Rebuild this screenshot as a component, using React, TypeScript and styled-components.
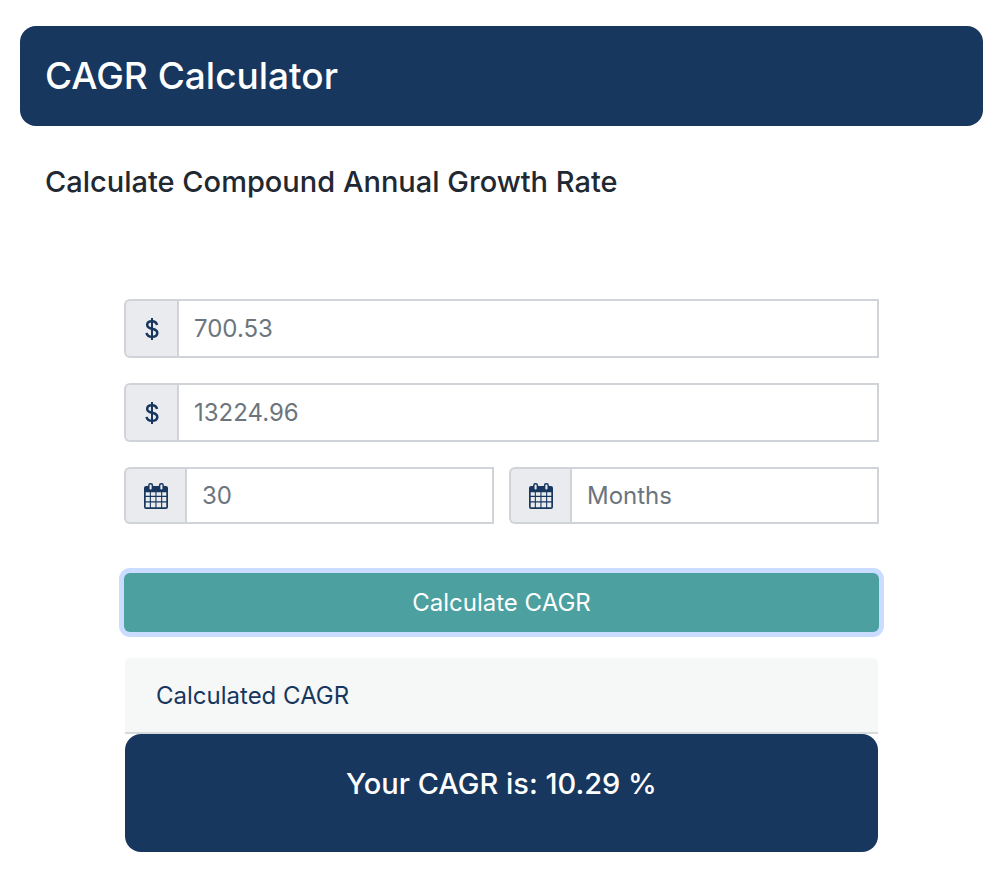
import React, { useState } from "react";
import styled, { createGlobalStyle } from "styled-components";

const navy = "#18375f";
const line = "#d0d4d8";

const GlobalStyle = createGlobalStyle`
  *, *::before, *::after { box-sizing: border-box; }
  body {
    margin: 0;
    background: #fff;
    color: #212832;
    font-family: Inter, "Liberation Sans", sans-serif;
    font-size: 24px;
    line-height: 36px;
  }
`;

const Page = styled.main`
  padding: 26px 17px 32px 20px;
`;

const Header = styled.header`
  padding: 26px 25px;
  border-radius: 16px;
  background: ${navy};
  color: #fff;
`;

const Title = styled.h1`
  margin: 0;
  font-size: 37px;
  font-weight: 500;
  line-height: 48px;
`;

const Subtitle = styled.h2`
  margin: 0;
  padding: 38px 25px 0;
  font-size: 29px;
  font-weight: 500;
  line-height: 36px;
`;

const Form = styled.form`
  margin: 99px 104px 0;
`;

const Fields = styled.div`
  display: grid;
  grid-template-columns: repeat(2, minmax(0, 1fr));
  gap: 25px 15px;
`;

const Group = styled.label<{ $wide?: boolean }>`
  display: flex;
  height: ${(p) => (p.$wide ? 59 : 57)}px;
  grid-column: ${(p) => (p.$wide ? "1 / -1" : "auto")};
`;

const Addon = styled.span<{ $wide?: boolean }>`
  display: flex;
  flex: none;
  align-items: center;
  justify-content: center;
  width: ${(p) => (p.$wide ? 53 : 61)}px;
  border: 2px solid ${line};
  border-right: 0;
  border-radius: 6px 0 0 6px;
  background: #e9ebef;
  color: ${navy};
`;

const Input = styled.input`
  flex: 1;
  min-width: 0;
  padding: 0 15px;
  border: 2px solid ${line};
  border-radius: 0;
  background: #fff;
  color: #6c757d;
  font: inherit;
  outline: 0;

  &::placeholder {
    color: #6c757d;
    opacity: 1;
  }
`;

const Submit = styled.button`
  display: block;
  width: 100%;
  height: 59px;
  margin-top: 49px;
  padding: 0;
  border: 0;
  border-radius: 6px;
  background: #4ca09f;
  box-shadow: 0 0 0 5px #cadcff;
  color: #fff;
  font: inherit;
  outline: 0;
`;

const Result = styled.section`
  margin: 26px 1px 0;
`;

const ResultHeading = styled.h3`
  margin: 0;
  padding: 20px 31px 18px;
  border-bottom: 2px solid #d5dadd;
  border-radius: 5px 5px 0 0;
  background: #f6f8f8;
  color: ${navy};
  font-size: 24px;
  font-weight: 400;
  line-height: 36px;
`;

const ResultBody = styled.output`
  display: block;
  padding: 32px 24px 50px;
  border-radius: 16px;
  background: ${navy};
  color: #fff;
  font-size: 29px;
  font-weight: 500;
  line-height: 36px;
  text-align: center;
`;

function Dollar() {
  return (
    <svg width="14" height="24" viewBox="0 0 14 24" fill="none" stroke="currentColor" aria-hidden="true">
      <path d="M7 1v22" strokeWidth="2" />
      <path
        d="M12 8C11.600 5.700 9.800 4.300 7 4.300C4.100 4.300 2.200 5.700 2.200 7.900C2.200 10.200 4.100 11 7 11.700C10.200 12.400 12.300 13.400 12.300 16C12.300 18.500 10.100 19.800 7 19.800C3.800 19.800 1.900 18.300 1.600 15.900"
        strokeWidth="2.500"
      />
    </svg>
  );
}

function Calendar() {
  return (
    <svg width="24" height="26" viewBox="0 0 24 26" aria-hidden="true">
      <path
        fill="currentColor"
        fillRule="evenodd"
        d="M2 3H22Q24 3 24 5V24Q24 26 22 26H2Q0 26 0 24V5Q0 3 2 3ZM1.700 9.200V12.800H5.800V9.200ZM6.900 9.200V12.800H11.400V9.200ZM12.500 9.200V12.800H17.100V9.200ZM18.200 9.200V12.800H22.300V9.200ZM1.700 13.900V18.300H5.800V13.900ZM6.900 13.900V18.300H11.400V13.900ZM12.500 13.900V18.300H17.100V13.900ZM18.200 13.900V18.300H22.300V13.900ZM1.700 19.400V24.300H5.800V19.400ZM6.900 19.400V24.300H11.400V19.400ZM12.500 19.400V24.300H17.100V19.400ZM18.200 19.400V24.300H22.300V19.400Z"
      />
      <g fill="#e9ebef" stroke="currentColor" strokeWidth="1.500">
        <rect x="4.800" y="0.800" width="3.600" height="6.400" rx="1.600" />
        <rect x="15.600" y="0.800" width="3.600" height="6.400" rx="1.600" />
      </g>
    </svg>
  );
}

type FieldProps = {
  label: string;
  value: string;
  placeholder?: string;
  wide?: boolean;
  onChange: (value: string) => void;
};

function Field({ label, value, placeholder, wide, onChange }: FieldProps) {
  return (
    <Group $wide={wide}>
      <Addon $wide={wide}>{wide ? <Dollar /> : <Calendar />}</Addon>
      <Input
        aria-label={label}
        inputMode="decimal"
        value={value}
        placeholder={placeholder}
        onChange={(e) => onChange(e.target.value)}
      />
    </Group>
  );
}

function growthRate(start: string, end: string, years: string, months: string) {
  const span = Number(years) + Number(months) / 12;
  return ((Number(end) / Number(start)) ** (1 / span) - 1) * 100;
}

export default function App() {
  const [start, setStart] = useState("700.53");
  const [end, setEnd] = useState("13224.96");
  const [years, setYears] = useState("30");
  const [months, setMonths] = useState("");
  const [rate, setRate] = useState(() => growthRate(start, end, years, months));

  return (
    <>
      <GlobalStyle />
      <Page>
        <Header>
          <Title>CAGR Calculator</Title>
        </Header>
        <Subtitle>Calculate Compound Annual Growth Rate</Subtitle>
        <Form
          onSubmit={(e) => {
            e.preventDefault();
            setRate(growthRate(start, end, years, months));
          }}
        >
          <Fields>
            <Field wide label="Initial value" value={start} onChange={setStart} />
            <Field wide label="Final value" value={end} onChange={setEnd} />
            <Field label="Years" value={years} placeholder="Years" onChange={setYears} />
            <Field label="Months" value={months} placeholder="Months" onChange={setMonths} />
          </Fields>
          <Submit type="submit">Calculate CAGR</Submit>
          <Result>
            <ResultHeading>Calculated CAGR</ResultHeading>
            <ResultBody>Your CAGR is: {rate.toFixed(2)} %</ResultBody>
          </Result>
        </Form>
      </Page>
    </>
  );
}
